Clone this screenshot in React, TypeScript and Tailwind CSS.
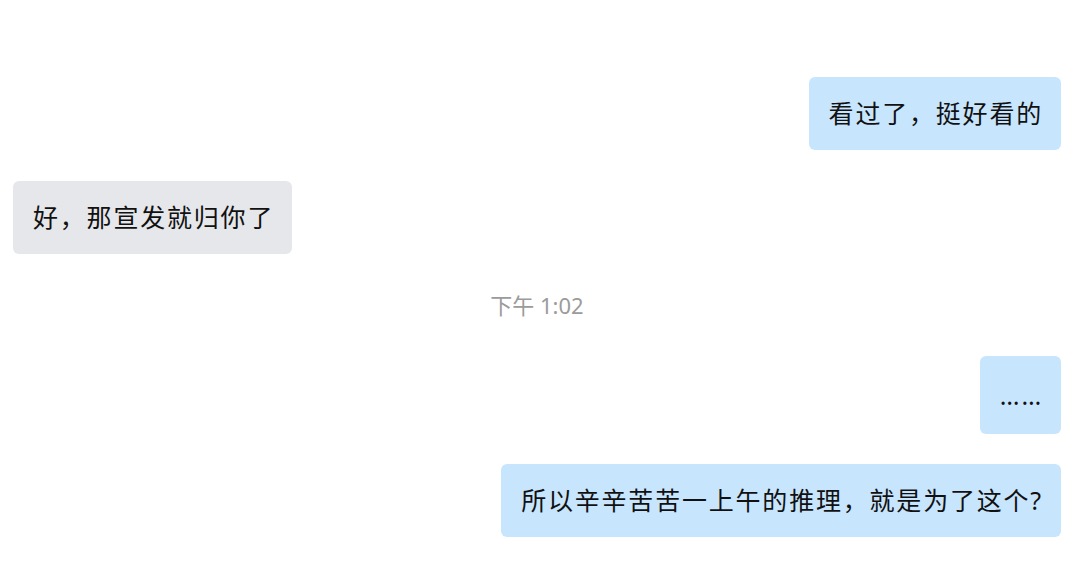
type Msg =
  | { kind: "me" | "them"; text: string; h?: string }
  | { kind: "time"; text: string };

const messages: Msg[] = [
  { kind: "me", text: "看过了，挺好看的" },
  { kind: "them", text: "好，那宣发就归你了" },
  { kind: "time", text: "下午 1:02" },
  { kind: "me", text: "……", h: "h-[78px]" },
  { kind: "me", text: "所以辛辛苦苦一上午的推理，就是为了这个?" },
];

const font = { fontFamily: '"Noto Sans", "Noto Sans CJK SC", sans-serif' };

function Bubble({ kind, text, h }: { kind: "me" | "them"; text: string; h?: string }) {
  const mine = kind === "me";
  return (
    <div className={mine ? "flex justify-end" : "flex justify-start"}>
      <div
        className={`flex items-center pl-5 pr-[18px] rounded-[6px] text-[25px] leading-[33px] tracking-[1.8px] text-[#111] ${
          h ?? "h-[73px]"
        } ${mine ? "bg-[#c8e5fe]" : "bg-[#e6e7ea]"}`}
      >
        {text}
      </div>
    </div>
  );
}

export default function App() {
  return (
    <div className="w-[1080px] h-[561px] bg-white overflow-hidden pl-[13px] pr-[19px] pt-[77px]" style={font}>
      <div className="flex flex-col">
        <Bubble {...(messages[0] as any)} />
        <div className="mt-[31px]">
          <Bubble {...(messages[1] as any)} />
        </div>
        <div className="mt-[36px] text-center text-[22px] leading-[30px] text-[#9b9b9b]">
          {messages[2].text}
        </div>
        <div className="mt-[36px]">
          <Bubble {...(messages[3] as any)} />
        </div>
        <div className="mt-[30px]">
          <Bubble {...(messages[4] as any)} />
        </div>
      </div>
    </div>
  );
}
